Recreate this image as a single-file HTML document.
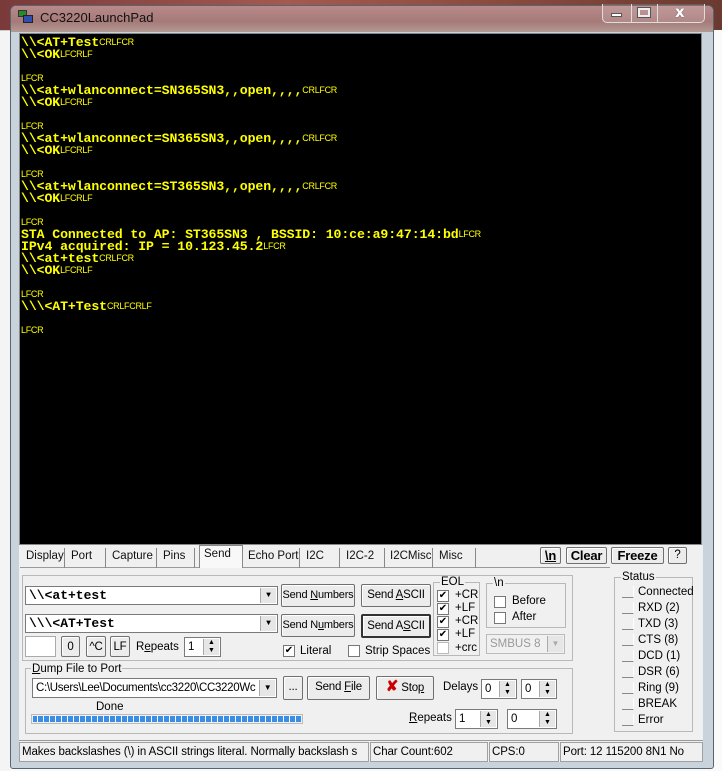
<!DOCTYPE html>
<html><head><meta charset="utf-8"><style>
*{box-sizing:border-box;margin:0;padding:0}
body{width:722px;height:771px;overflow:hidden;position:relative;background:#fafafa;font-family:"Liberation Sans",sans-serif;font-size:11.5px;color:#000;white-space:nowrap}
.a{position:absolute}
#desk{left:0;top:0;width:722px;height:30px;background:linear-gradient(90deg,#7a3a3a,#a35a50 40%,#8a4a3e 70%,#6a3a30)}
#frame{left:10px;top:5px;width:704px;height:764px;background:#c9d3dc;border:1px solid #5a6470;border-radius:6px 6px 3px 3px}
#title{left:11px;top:6px;width:702px;height:26px;background:linear-gradient(180deg,#b88a8a,#a57a78 60%,#b39a94);border-radius:5px 5px 0 0}
#term{left:19px;top:33px;width:683px;height:512px;background:#000;border:1px solid #888}
.ln{position:absolute;left:1px;font:bold 13.2px/12px "Liberation Mono",monospace;color:#ffff00;white-space:pre;letter-spacing:-0.1px}
.s{font:9px "Liberation Sans Narrow","Liberation Sans",sans-serif;vertical-align:top;letter-spacing:-0.3px}
#panel{left:19px;top:545px;width:684px;height:217px;background:#f0f0f0}
.tab{position:absolute;top:548px;height:20px;font-size:11.5px;color:#111;padding:2px 4px;border-right:1px solid #888}
.btn{position:absolute;background:#ececec;border:1px solid #707070;border-radius:2px;font-size:11.5px;text-align:center;line-height:20px;box-shadow:inset 1px 1px #fff;white-space:nowrap;letter-spacing:-0.2px}
.box{position:absolute;border:1px solid #b8b8b8}
.lbl{position:absolute;font-size:11.5px;background:#f0f0f0;padding:0 1px;line-height:12px}
.inp{position:absolute;background:#fff;border:1px solid #7a7a7a;font-size:11.5px;line-height:18px;padding-left:3px;overflow:hidden}
.dd{position:absolute;right:1px;top:1px;width:16px;bottom:1px;background:#e6e6e6;border-left:1px solid #aaa;text-align:center;font-size:8px;line-height:16px}
.cb{position:absolute;width:12px;height:12px;border:1px solid #777;background:#fff;font-size:10px;line-height:10px;text-align:center}
.led{position:absolute;width:12px;height:12px;border-right:1px solid #fff;border-bottom:1px solid #888;}
.sb{position:absolute;top:742px;height:20px;border:1px solid #a0a0a0;font-size:11.5px;line-height:18px;padding-left:2px;white-space:nowrap;overflow:hidden;background:#f0f0f0;letter-spacing:-0.1px}
</style></head><body>
<div class="a" id="desk"></div>
<div class="a" style="left:0;top:30px;width:10px;height:741px;background:#f4f4f4;border-top:1px solid #ccc"></div>
<div class="a" id="frame"></div>
<div class="a" id="title"></div>
<div class="a" style="left:18px;top:10px;width:16px;height:14px"><div class="a" style="left:0;top:0;width:9px;height:7px;background:#2a8a2a;border:1px solid #333"></div><div class="a" style="left:5px;top:5px;width:10px;height:8px;background:#3050b0;border:1px solid #222"></div></div>
<div class="a" style="left:40px;top:10px;font-size:13px;color:#111">CC3220LaunchPad</div>
<div class="a" style="left:602px;top:4px;width:103px;height:19px;border:1px solid #ddd;border-top:none;border-radius:0 0 5px 5px;background:rgba(255,255,255,.12)"></div>
<div class="a" style="left:631px;top:4px;width:1px;height:18px;background:#ddd"></div>
<div class="a" style="left:657px;top:4px;width:1px;height:18px;background:#ddd"></div>
<div class="a" style="left:611px;top:13px;width:11px;height:4px;background:#fff;border:1px solid #555"></div>
<div class="a" style="left:638px;top:8px;width:12px;height:9px;border:2px solid #eee;outline:1px solid #555"></div>
<div class="a" style="left:675px;top:3px;color:#fff;font:bold 15px 'DejaVu Sans',sans-serif;text-shadow:0 0 1px #333">x</div>
<div class="a" id="term">
<div class="ln" style="top:3px">\\&lt;AT+Test<span class="s">CRLFCR</span></div>
<div class="ln" style="top:15px">\\&lt;OK<span class="s">LFCRLF</span></div>
<div class="ln" style="top:39px"><span class="s">LFCR</span></div>
<div class="ln" style="top:51px">\\&lt;at+wlanconnect=SN365SN3,,open,,,,<span class="s">CRLFCR</span></div>
<div class="ln" style="top:63px">\\&lt;OK<span class="s">LFCRLF</span></div>
<div class="ln" style="top:87px"><span class="s">LFCR</span></div>
<div class="ln" style="top:99px">\\&lt;at+wlanconnect=SN365SN3,,open,,,,<span class="s">CRLFCR</span></div>
<div class="ln" style="top:111px">\\&lt;OK<span class="s">LFCRLF</span></div>
<div class="ln" style="top:135px"><span class="s">LFCR</span></div>
<div class="ln" style="top:147px">\\&lt;at+wlanconnect=ST365SN3,,open,,,,<span class="s">CRLFCR</span></div>
<div class="ln" style="top:159px">\\&lt;OK<span class="s">LFCRLF</span></div>
<div class="ln" style="top:183px"><span class="s">LFCR</span></div>
<div class="ln" style="top:195px">STA Connected to AP: ST365SN3 , BSSID: 10:ce:a9:47:14:bd<span class="s">LFCR</span></div>
<div class="ln" style="top:207px">IPv4 acquired: IP = 10.123.45.2<span class="s">LFCR</span></div>
<div class="ln" style="top:219px">\\&lt;at+test<span class="s">CRLFCR</span></div>
<div class="ln" style="top:231px">\\&lt;OK<span class="s">LFCRLF</span></div>
<div class="ln" style="top:255px"><span class="s">LFCR</span></div>
<div class="ln" style="top:267px">\\\&lt;AT+Test<span class="s">CRLFCRLF</span></div>
<div class="ln" style="top:291px"><span class="s">LFCR</span></div>
</div>
<div class="a" id="panel"></div>
<div class="a" style="left:20px;top:567px;width:590px;height:1px;background:#999"></div>
<div class="tab" style="left:22px;width:43px">Display</div>
<div class="tab" style="left:67px;width:39px">Port</div>
<div class="tab" style="left:108px;width:49px">Capture</div>
<div class="tab" style="left:159px;width:36px">Pins</div>
<div class="tab" style="left:199px;top:545px;height:23px;width:44px;background:#f8f8f8;border-left:1px solid #888;border-top:1px solid #888">Send</div>
<div class="tab" style="left:244px;width:56px">Echo Port</div>
<div class="tab" style="left:302px;width:38px">I2C</div>
<div class="tab" style="left:342px;width:43px">I2C-2</div>
<div class="tab" style="left:386px;width:47px">I2CMisc</div>
<div class="tab" style="left:435px;width:41px">Misc</div>
<div class="btn" style="left:540px;top:547px;width:21px;height:17px;line-height:15px;font-weight:bold;font-size:13px"><u>\n</u></div>
<div class="btn" style="left:566px;top:547px;width:41px;height:17px;line-height:15px;font-weight:bold;font-size:13px">Clear</div>
<div class="btn" style="left:611px;top:547px;width:53px;height:17px;line-height:15px;font-weight:bold;font-size:13px">Freeze</div>
<div class="btn" style="left:668px;top:547px;width:19px;height:17px;line-height:15px">?</div>
<div class="box" style="left:22px;top:575px;width:551px;height:86px"></div>
<div class="inp" style="left:25px;top:586px;width:253px;height:19px;font:bold 13px/17px 'Liberation Mono',monospace">\\&lt;at+test<div class="dd">▼</div></div>
<div class="inp" style="left:25px;top:614px;width:253px;height:19px;font:bold 13px/17px 'Liberation Mono',monospace">\\\&lt;AT+Test<div class="dd">▼</div></div>
<div class="btn" style="left:281px;top:584px;width:74px;height:23px;font-size:11px">Send <u>N</u>umbers</div>
<div class="btn" style="left:281px;top:614px;width:74px;height:23px;font-size:11px">Send N<u>u</u>mbers</div>
<div class="btn" style="left:361px;top:584px;width:70px;height:23px">Send <u>A</u>SCII</div>
<div class="btn" style="left:361px;top:614px;width:70px;height:24px;border:2px solid #333">Send A<u>S</u>CII</div>
<div class="inp" style="left:25px;top:636px;width:31px;height:21px;border-color:#aaa"></div>
<div class="btn" style="left:61px;top:636px;width:19px;height:21px">0</div>
<div class="btn" style="left:86px;top:636px;width:20px;height:21px">^C</div>
<div class="btn" style="left:110px;top:636px;width:20px;height:21px">LF</div>
<div class="a" style="left:136px;top:641px">R<u>e</u>peats</div>
<div class="inp" style="left:184px;top:637px;width:37px;height:20px">1<div class="dd" style="font-size:7px;line-height:8px">▲<br>▼</div></div>
<div class="cb" style="left:283px;top:645px">✔</div><div class="a" style="left:300px;top:645px">Literal</div>
<div class="cb" style="left:348px;top:645px"></div><div class="a" style="left:365px;top:645px">Strip Spaces</div>
<div class="box" style="left:433px;top:582px;width:47px;height:74px"></div>
<div class="lbl" style="left:440px;top:576px">EOL</div>
<div class="cb" style="left:437px;top:590px">✔</div><div class="a" style="left:455px;top:589px">+CR</div>
<div class="cb" style="left:437px;top:603px">✔</div><div class="a" style="left:455px;top:602px">+LF</div>
<div class="cb" style="left:437px;top:616px">✔</div><div class="a" style="left:455px;top:615px">+CR</div>
<div class="cb" style="left:437px;top:629px">✔</div><div class="a" style="left:455px;top:628px">+LF</div>
<div class="cb" style="left:437px;top:642px;border-color:#bbb"></div><div class="a" style="left:455px;top:642px">+crc</div>
<div class="box" style="left:486px;top:583px;width:80px;height:45px"></div>
<div class="lbl" style="left:493px;top:577px">\n</div>
<div class="cb" style="left:494px;top:596px"></div><div class="a" style="left:512px;top:595px">Before</div>
<div class="cb" style="left:494px;top:612px"></div><div class="a" style="left:512px;top:611px">After</div>
<div class="inp" style="left:486px;top:634px;width:79px;height:20px;color:#999;background:#f0f0f0;border-color:#bbb">SMBUS 8<div class="dd" style="color:#aaa">▼</div></div>
<div class="box" style="left:25px;top:668px;width:548px;height:66px"></div>
<div class="lbl" style="left:31px;top:663px"><u>D</u>ump File to Port</div>
<div class="inp" style="left:32px;top:678px;width:245px;height:20px;letter-spacing:-0.3px">C:\Users\Lee\Documents\cc3220\CC3220Wc<div class="dd">▼</div></div>
<div class="btn" style="left:283px;top:676px;width:20px;height:24px">...</div>
<div class="btn" style="left:307px;top:676px;width:63px;height:24px">Send <u>F</u>ile</div>
<div class="btn" style="left:376px;top:676px;width:58px;height:24px"><span style="color:#c00;font-weight:bold;font-size:15px">✘</span> Sto<u>p</u></div>
<div class="a" style="left:443px;top:681px">Delays</div>
<div class="inp" style="left:481px;top:679px;width:36px;height:20px">0<div class="dd" style="font-size:7px;line-height:8px">▲<br>▼</div></div>
<div class="inp" style="left:521px;top:679px;width:36px;height:20px">0<div class="dd" style="font-size:7px;line-height:8px">▲<br>▼</div></div>
<div class="a" style="left:409px;top:712px"><u>R</u>epeats</div>
<div class="inp" style="left:455px;top:709px;width:43px;height:20px">1<div class="dd" style="font-size:7px;line-height:8px">▲<br>▼</div></div>
<div class="inp" style="left:507px;top:709px;width:50px;height:20px">0<div class="dd" style="font-size:7px;line-height:8px">▲<br>▼</div></div>
<div class="a" style="left:96px;top:701px">Done</div>
<div class="a" style="left:31px;top:714px;width:272px;height:10px;border:1px solid #bbb;background:repeating-linear-gradient(90deg,#3a8ee6 0 5px,#fff 5px 6px);background-clip:content-box;padding:1px"></div>
<div class="box" style="left:614px;top:577px;width:79px;height:155px"></div>
<div class="lbl" style="left:621px;top:571px">Status</div>
<div class="led" style="left:622px;top:586px"></div><div class="a" style="left:638px;top:586px">Connected</div>
<div class="led" style="left:622px;top:602px"></div><div class="a" style="left:638px;top:602px">RXD (2)</div>
<div class="led" style="left:622px;top:618px"></div><div class="a" style="left:638px;top:618px">TXD (3)</div>
<div class="led" style="left:622px;top:634px"></div><div class="a" style="left:638px;top:634px">CTS (8)</div>
<div class="led" style="left:622px;top:650px"></div><div class="a" style="left:638px;top:650px">DCD (1)</div>
<div class="led" style="left:622px;top:666px"></div><div class="a" style="left:638px;top:666px">DSR (6)</div>
<div class="led" style="left:622px;top:682px"></div><div class="a" style="left:638px;top:682px">Ring (9)</div>
<div class="led" style="left:622px;top:698px"></div><div class="a" style="left:638px;top:698px">BREAK</div>
<div class="led" style="left:622px;top:714px"></div><div class="a" style="left:638px;top:714px">Error</div>
<div class="a" style="left:19px;top:740px;width:684px;height:1px;background:#999"></div>
<div class="sb" style="left:19px;width:350px">Makes backslashes (\) in ASCII strings literal. Normally backslash s</div>
<div class="sb" style="left:370px;width:118px">Char Count:602</div>
<div class="sb" style="left:489px;width:70px">CPS:0</div>
<div class="sb" style="left:560px;width:143px">Port: 12 115200 8N1 No</div>
</body></html>
